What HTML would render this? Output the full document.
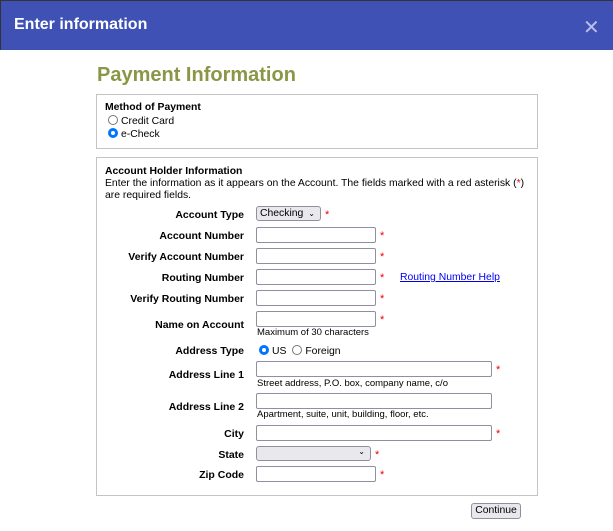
<!DOCTYPE html>
<html><head><style>
*{margin:0;padding:0;box-sizing:border-box}
body{width:613px;height:531px;background:#fff;font-family:"Liberation Sans",Arial,sans-serif;font-size:10.4px;color:#000;position:relative;overflow:hidden}
.hdr{position:absolute;left:0;top:0;width:613px;height:50px;background:#3f51b5;border-top:1px solid #333;border-left:1px solid #333}
.hdr .t{position:absolute;left:13px;top:15px;color:#fff;font-size:16px;font-weight:bold}
.hdr .x{position:absolute;left:582px;top:14px;color:#b8c0e6;font-size:20px}
.a{position:absolute;white-space:nowrap}
h1{position:absolute;left:97px;top:64px;font-size:20px;color:#8b9646;font-weight:bold}
.box{position:absolute;border:1px solid #c4c4c4}
.lbl{position:absolute;right:369px;font-weight:bold;white-space:nowrap;font-size:10.5px}
.in{position:absolute;left:256px;height:16px;border:1px solid #8f8f9d;border-radius:2px;background:#fff}
.st{position:absolute;color:#e00;font-size:11px}
.hint{position:absolute;left:257px;font-size:9.5px}
.sel{position:absolute;border:1px solid #8f8f9d;border-radius:3px;background:#e9e9ed;height:15px}
.r{display:inline-block;width:10px;height:10px;border-radius:50%;border:1px solid #777;vertical-align:-1px;margin-right:3px;background:#fff}
.r.on{border:3px solid #0075ff}
</style></head><body>
<div class="hdr"><div class="t">Enter information</div><div class="x">✕</div></div>
<h1>Payment Information</h1>
<div class="box" style="left:96px;top:94px;width:442px;height:55px"></div>
<div class="a" style="left:105px;top:102px;font-weight:bold">Method of Payment</div>
<div class="a" style="left:108px;top:115px"><span class="r"></span>Credit Card</div>
<div class="a" style="left:108px;top:128px"><span class="r on"></span>e-Check</div>
<div class="box" style="left:96px;top:157px;width:442px;height:339px"></div>
<div class="a" style="left:105px;top:166px;font-weight:bold">Account Holder Information</div>
<div class="a" style="left:105px;top:178px">Enter the information as it appears on the Account. The fields marked with a red asterisk (<span style="color:#e00">*</span>)</div>
<div class="a" style="left:105px;top:190px">are required fields.</div>

<div class="lbl" style="top:209px">Account Type</div>
<div class="sel" style="left:256px;top:206px;width:65px;padding-left:3px;line-height:13px">Checking <span style="font-size:8px;margin-left:2px">⌄</span></div>
<div class="st" style="left:325px;top:209px">*</div>

<div class="lbl" style="top:230px">Account Number</div><div class="in" style="top:227px;width:120px"></div><div class="st" style="left:380px;top:230px">*</div>
<div class="lbl" style="top:251px">Verify Account Number</div><div class="in" style="top:248px;width:120px"></div><div class="st" style="left:380px;top:251px">*</div>
<div class="lbl" style="top:272px">Routing Number</div><div class="in" style="top:269px;width:120px"></div><div class="st" style="left:380px;top:272px">*</div>
<div class="a" style="left:400px;top:272px;color:#00e;text-decoration:underline">Routing Number Help</div>
<div class="lbl" style="top:293px">Verify Routing Number</div><div class="in" style="top:290px;width:120px"></div><div class="st" style="left:380px;top:293px">*</div>
<div class="lbl" style="top:319px">Name on Account</div><div class="in" style="top:311px;width:120px"></div><div class="st" style="left:380px;top:314px">*</div>
<div class="hint" style="top:327px">Maximum of 30 characters</div>

<div class="lbl" style="top:345px">Address Type</div>
<div class="a" style="left:259px;top:345px"><span class="r on"></span>US <span class="r" style="margin-left:3px"></span>Foreign</div>

<div class="lbl" style="top:369px">Address Line 1</div><div class="in" style="top:361px;width:236px"></div><div class="st" style="left:496px;top:364px">*</div>
<div class="hint" style="top:378px">Street address, P.O. box, company name, c/o</div>
<div class="lbl" style="top:401px">Address Line 2</div><div class="in" style="top:393px;width:236px"></div>
<div class="hint" style="top:409px">Apartment, suite, unit, building, floor, etc.</div>
<div class="lbl" style="top:428px">City</div><div class="in" style="top:425px;width:236px"></div><div class="st" style="left:496px;top:428px">*</div>
<div class="lbl" style="top:449px">State</div>
<div class="sel" style="left:256px;top:446px;width:115px"><span style="position:absolute;right:5px;top:0;font-size:8px">⌄</span></div>
<div class="st" style="left:375px;top:449px">*</div>
<div class="lbl" style="top:469px">Zip Code</div><div class="in" style="top:466px;width:120px"></div><div class="st" style="left:380px;top:469px">*</div>

<div class="a" style="left:471px;top:503px;width:50px;height:16px;border:1px solid #8f8f9d;border-radius:3px;background:#e9e9ed;text-align:center;line-height:14px">Continue</div>
</body></html>
